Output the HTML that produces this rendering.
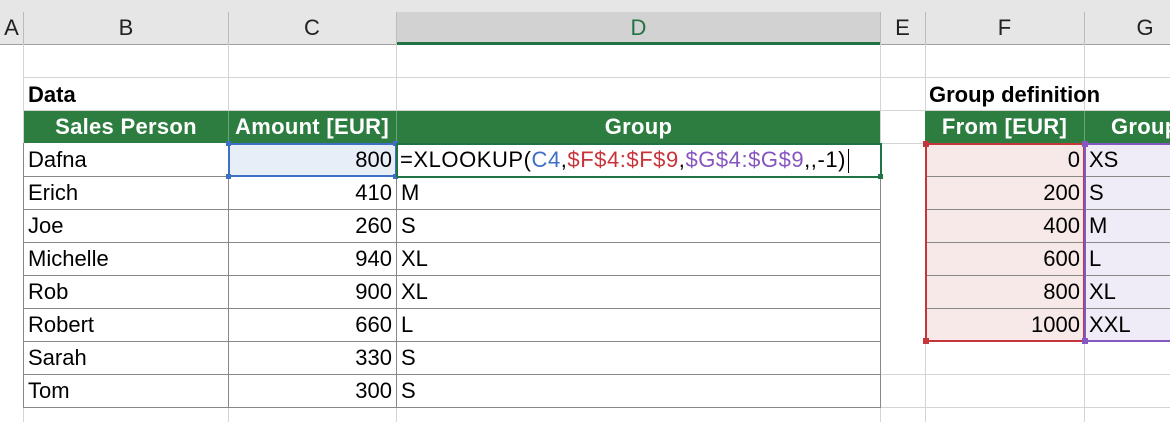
<!DOCTYPE html>
<html><head><meta charset="utf-8"><style>
*{margin:0;padding:0;box-sizing:border-box}
body{width:1170px;height:422px;overflow:hidden;background:#fff;font-family:"Liberation Sans",Arial,sans-serif;font-size:22px;color:#000;position:relative}
.a{position:absolute}
.hl{position:absolute;height:1px}
.vl{position:absolute;width:1px}
.c{position:absolute;height:33px;line-height:33px;white-space:nowrap}
.r{text-align:right;padding-right:4px}
.l{padding-left:4px}
.b{font-weight:bold}
.w{color:#fff;font-weight:bold;text-align:center;letter-spacing:0.3px}
.h{position:absolute;top:12px;height:32px;line-height:32px;text-align:center;font-size:22px;color:#222}
</style></head><body>
<div class="a" style="left:0;top:0;width:1170px;height:44px;background:#e6e6e6"></div>
<div class="a" style="left:397px;top:12px;width:483px;height:32px;background:#d2d2d2"></div>
<div class="hl" style="left:0;top:44px;width:1170px;background:#a0a0a0"></div>
<div class="a" style="left:397px;top:42px;width:483px;height:3px;background:#217346"></div>
<div class="h" style="left:0;width:23px">A</div>
<div class="h" style="left:24px;width:204px">B</div>
<div class="h" style="left:228px;width:168px">C</div>
<div class="h" style="left:397px;width:483px;color:#217346">D</div>
<div class="h" style="left:880px;width:45px">E</div>
<div class="h" style="left:925px;width:159px">F</div>
<div class="h" style="left:1084px;width:122px">G</div>
<div class="vl" style="left:23px;top:12px;height:32px;background:#bbb"></div>
<div class="vl" style="left:228px;top:12px;height:32px;background:#bbb"></div>
<div class="vl" style="left:396px;top:12px;height:32px;background:#bbb"></div>
<div class="vl" style="left:880px;top:12px;height:32px;background:#bbb"></div>
<div class="vl" style="left:925px;top:12px;height:32px;background:#bbb"></div>
<div class="vl" style="left:1084px;top:12px;height:32px;background:#bbb"></div>
<div class="hl" style="left:24px;top:77px;width:1146px;background:#d4d4d4"></div>
<div class="hl" style="left:24px;top:110px;width:1146px;background:#d4d4d4"></div>
<div class="hl" style="left:24px;top:374px;width:1146px;background:#d4d4d4"></div>
<div class="hl" style="left:880px;top:143px;width:290px;background:#d4d4d4"></div>
<div class="hl" style="left:880px;top:407px;width:290px;background:#d4d4d4"></div>
<div class="vl" style="left:23px;top:44px;height:378px;background:#d4d4d4"></div>
<div class="vl" style="left:228px;top:44px;height:378px;background:#d4d4d4"></div>
<div class="vl" style="left:396px;top:44px;height:378px;background:#d4d4d4"></div>
<div class="vl" style="left:880px;top:44px;height:378px;background:#d4d4d4"></div>
<div class="vl" style="left:925px;top:44px;height:378px;background:#d4d4d4"></div>
<div class="vl" style="left:1084px;top:44px;height:378px;background:#d4d4d4"></div>
<div class="c b" style="left:28px;top:78px">Data</div>
<div class="a" style="left:24px;top:111px;width:856px;height:32px;background:#2e7d40"></div>
<div class="vl" style="left:228px;top:111px;height:32px;background:#6aa57a"></div>
<div class="vl" style="left:396px;top:111px;height:32px;background:#6aa57a"></div>
<div class="c w" style="left:24px;top:110px;width:204px">Sales Person</div>
<div class="c w" style="left:228px;top:110px;width:168px">Amount [EUR]</div>
<div class="c w" style="left:397px;top:110px;width:483px">Group</div>
<div class="a" style="left:229px;top:144px;width:167px;height:32px;background:#e8eef8"></div>
<div class="hl" style="left:24px;top:176px;width:856px;background:#888"></div>
<div class="hl" style="left:24px;top:209px;width:856px;background:#888"></div>
<div class="hl" style="left:24px;top:242px;width:856px;background:#888"></div>
<div class="hl" style="left:24px;top:275px;width:856px;background:#888"></div>
<div class="hl" style="left:24px;top:308px;width:856px;background:#888"></div>
<div class="hl" style="left:24px;top:341px;width:856px;background:#888"></div>
<div class="hl" style="left:24px;top:374px;width:856px;background:#888"></div>
<div class="hl" style="left:24px;top:407px;width:857px;background:#888"></div>
<div class="vl" style="left:23px;top:143px;height:265px;background:#888"></div>
<div class="vl" style="left:228px;top:143px;height:265px;background:#888"></div>
<div class="vl" style="left:396px;top:143px;height:265px;background:#888"></div>
<div class="vl" style="left:880px;top:143px;height:265px;background:#888"></div>
<div class="c l" style="left:24px;top:143px">Dafna</div>
<div class="c l" style="left:24px;top:176px">Erich</div>
<div class="c l" style="left:24px;top:209px">Joe</div>
<div class="c l" style="left:24px;top:242px">Michelle</div>
<div class="c l" style="left:24px;top:275px">Rob</div>
<div class="c l" style="left:24px;top:308px">Robert</div>
<div class="c l" style="left:24px;top:341px">Sarah</div>
<div class="c l" style="left:24px;top:374px">Tom</div>
<div class="c r" style="left:228px;top:143px;width:168px">800</div>
<div class="c r" style="left:228px;top:176px;width:168px">410</div>
<div class="c r" style="left:228px;top:209px;width:168px">260</div>
<div class="c r" style="left:228px;top:242px;width:168px">940</div>
<div class="c r" style="left:228px;top:275px;width:168px">900</div>
<div class="c r" style="left:228px;top:308px;width:168px">660</div>
<div class="c r" style="left:228px;top:341px;width:168px">330</div>
<div class="c r" style="left:228px;top:374px;width:168px">300</div>
<div class="c l" style="left:397px;top:176px">M</div>
<div class="c l" style="left:397px;top:209px">S</div>
<div class="c l" style="left:397px;top:242px">XL</div>
<div class="c l" style="left:397px;top:275px">XL</div>
<div class="c l" style="left:397px;top:308px">L</div>
<div class="c l" style="left:397px;top:341px">S</div>
<div class="c l" style="left:397px;top:374px">S</div>
<div class="a" style="left:228px;top:143px;width:169px;height:34px;border:2px solid #3d6fc6"></div>
<div class="a" style="left:226px;top:141px;width:5px;height:5px;background:#3d6fc6"></div>
<div class="a" style="left:393px;top:141px;width:5px;height:5px;background:#3d6fc6"></div>
<div class="a" style="left:226px;top:174px;width:5px;height:5px;background:#3d6fc6"></div>
<div class="a" style="left:393px;top:174px;width:5px;height:5px;background:#3d6fc6"></div>
<div class="a" style="left:396px;top:143px;width:486px;height:35px;border:2px solid #217346;background:#fff"></div>
<div class="a" style="left:878px;top:174px;width:5px;height:5px;background:#217346"></div>
<div class="c" style="left:400px;top:143px;letter-spacing:0.55px">=XLOOKUP(<span style="color:#3d6fc6">C4</span>,<span style="color:#c8343a">$F$4:$F$9</span>,<span style="color:#8555c0">$G$4:$G$9</span>,,-1)<span style="display:inline-block;width:1px;height:24px;background:#000;vertical-align:middle;margin-left:2px"></span></div>
<div class="c b" style="left:929px;top:78px">Group definition</div>
<div class="a" style="left:925px;top:111px;width:245px;height:32px;background:#2e7d40"></div>
<div class="vl" style="left:1084px;top:111px;height:32px;background:#6aa57a"></div>
<div class="c w" style="left:925px;top:110px;width:159px">From [EUR]</div>
<div class="c w" style="left:1111px;top:110px">Group</div>
<div class="a" style="left:926px;top:144px;width:158px;height:197px;background:#f8e9e9"></div>
<div class="a" style="left:1085px;top:144px;width:85px;height:197px;background:#efebf7"></div>
<div class="hl" style="left:925px;top:176px;width:245px;background:#888"></div>
<div class="hl" style="left:925px;top:209px;width:245px;background:#888"></div>
<div class="hl" style="left:925px;top:242px;width:245px;background:#888"></div>
<div class="hl" style="left:925px;top:275px;width:245px;background:#888"></div>
<div class="hl" style="left:925px;top:308px;width:245px;background:#888"></div>
<div class="a" style="left:925px;top:143px;width:160px;height:199px;border:2px solid #c3363c"></div>
<div class="a" style="left:1084px;top:143px;width:90px;height:199px;border:2px solid #8458c0"></div>
<div class="a" style="left:923px;top:141px;width:6px;height:6px;background:#c3363c"></div>
<div class="a" style="left:923px;top:338px;width:6px;height:6px;background:#c3363c"></div>
<div class="a" style="left:1082px;top:141px;width:6px;height:6px;background:#8458c0"></div>
<div class="a" style="left:1082px;top:338px;width:6px;height:6px;background:#8458c0"></div>
<div class="c r" style="left:925px;top:143px;width:159px">0</div>
<div class="c r" style="left:925px;top:176px;width:159px">200</div>
<div class="c r" style="left:925px;top:209px;width:159px">400</div>
<div class="c r" style="left:925px;top:242px;width:159px">600</div>
<div class="c r" style="left:925px;top:275px;width:159px">800</div>
<div class="c r" style="left:925px;top:308px;width:159px">1000</div>
<div class="c l" style="left:1085px;top:143px">XS</div>
<div class="c l" style="left:1085px;top:176px">S</div>
<div class="c l" style="left:1085px;top:209px">M</div>
<div class="c l" style="left:1085px;top:242px">L</div>
<div class="c l" style="left:1085px;top:275px">XL</div>
<div class="c l" style="left:1085px;top:308px">XXL</div>
</body></html>
